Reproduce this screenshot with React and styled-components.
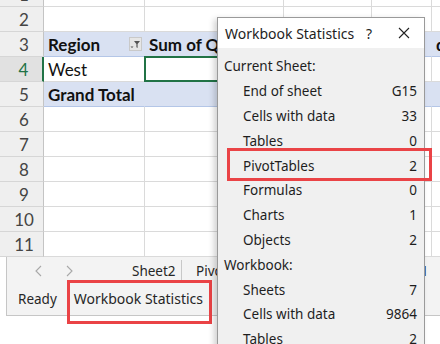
import React from "react";
import styled, { createGlobalStyle, css } from "styled-components";

const Global = createGlobalStyle`
  html, body { margin: 0; padding: 0; background: #ffffff; }
  #root { width: 440px; height: 344px; }
`;

const Window = styled.div`
  position: relative;
  width: 440px;
  height: 344px;
  overflow: hidden;
  background: #ffffff;
  display: flex;
  flex-direction: column;
`;

const Sheet = styled.div`
  margin-top: -18px;
  display: grid;
  grid-template-columns: 44px 101px 139px 88px 60px 1fr;
  grid-auto-rows: 25px;
`;

const RowHead = styled.div`
  display: flex;
  align-items: center;
  justify-content: center;
  padding-left: 5px;
  font-family: Lato, "Noto Sans", sans-serif;
  font-size: 17px;
  color: #444444;
  background: #efefef;
  border-right: 1px solid #c4c4c4;
  border-bottom: 1px solid #d6d6d6;
  box-sizing: border-box;
  ${(p) =>
    p.$selected &&
    css`
      color: #217346;
      background: #e1e1e1;
      border-right: 2px solid #217346;
    `}
`;

const Cell = styled.div`
  position: relative;
  display: flex;
  align-items: center;
  justify-content: space-between;
  padding-left: 4px;
  box-sizing: border-box;
  font-family: Lato, "Noto Sans", sans-serif;
  font-size: 17px;
  color: #111111;
  white-space: nowrap;
  overflow: visible;
  border-right: 1px solid #dadada;
  border-bottom: 1px solid #dadada;
  background: ${(p) => (p.$band ? "#d9e1f2" : "#ffffff")};
  font-weight: ${(p) => (p.$bold ? 700 : 400)};
  ${(p) =>
    p.$band &&
    css`
      border-right-color: #d9e1f2;
      border-bottom-color: #b4c6e7;
    `}
  ${(p) =>
    p.$active &&
    css`
      &::after {
        content: "";
        position: absolute;
        left: -1px;
        top: -1px;
        right: -1px;
        bottom: -1px;
        border: 2px solid #217346;
      }
    `}
`;

const FilterBtn = styled.span`
  width: 13px;
  height: 14px;
  margin-right: 2px;
  background: #e6e6e6;
  border: 1px solid #c9c9c9;
  box-sizing: border-box;
  display: flex;
  align-items: center;
  justify-content: center;
`;

const TabBar = styled.div`
  height: 25px;
  margin-left: 6px;
  border-left: 1px solid #c6c6c6;
  background: #f3f3f3;
  display: flex;
  align-items: stretch;
  font-family: "Noto Sans", "Open Sans", sans-serif;
  font-size: 13.5px;
  color: #262626;
`;

const Arrows = styled.div`
  display: flex;
  align-items: center;
  gap: 24px;
  padding-left: 28px;
  width: 82px;
  box-sizing: border-box;
  padding-top: 2px;
`;

const Tab = styled.div`
  display: flex;
  align-items: center;
  flex: none;
  width: ${(p) => p.$w}px;
  padding-left: ${(p) => p.$pl}px;
  box-sizing: border-box;
  border-right: ${(p) => (p.$sep ? "1px solid #c8c8c8" : "none")};
  margin: 3px 0 0;
  white-space: nowrap;
`;

const StatusBar = styled.div`
  height: 33px;
  margin-left: 6px;
  border-left: 1px solid #c6c6c6;
  border-bottom: 1px solid #c6c6c6;
  background: #f3f3f3;
  display: flex;
  align-items: center;
  gap: 17px;
  padding-left: 11px;
  font-family: "Noto Sans", "Open Sans", sans-serif;
  font-size: 13.5px;
  color: #262626;
`;

const Boxed = styled.span`
  position: relative;
  font-size: 14px;
  &::after {
    content: "";
    position: absolute;
    left: -7px;
    right: -9px;
    top: -9px;
    bottom: -16px;
    border: 3px solid #ea4346;
  }
`;

const Dialog = styled.div`
  position: absolute;
  left: 217px;
  top: 17px;
  width: 208px;
  height: 340px;
  box-sizing: border-box;
  border: 1px solid #9a9a9a;
  background: #f0f0f0;
  box-shadow: -3px 2px 6px rgba(0, 0, 0, 0.18);
  font-family: "Noto Sans", "Open Sans", sans-serif;
  font-size: 13.5px;
  color: #1e1e1e;
`;

const TitleBar = styled.div`
  height: 30px;
  background: #ffffff;
  display: flex;
  align-items: center;
  padding-left: 7px;
  padding-right: 14px;
`;

const Title = styled.div`
  flex: 1;
  font-size: 14px;
`;

const Help = styled.div`
  width: 10px;
  margin-right: 22px;
  font-size: 14px;
`;

const Body = styled.div`
  padding-top: 6px;
  display: flex;
  flex-direction: column;
`;

const StatRow = styled.div`
  position: relative;
  height: 24.8px;
  display: flex;
  align-items: center;
  justify-content: space-between;
  padding-left: ${(p) => (p.$section ? 6 : 25)}px;
  padding-right: 7px;
  white-space: nowrap;
  ${(p) =>
    p.$highlight &&
    css`
      &::after {
        content: "";
        position: absolute;
        left: 9px;
        right: -8px;
        top: -5px;
        bottom: -3px;
        border: 3px solid #ea4346;
      }
    `}
`;

const Funnel = () => (
  <svg width="11" height="11" viewBox="0 0 11 11">
    <path d="M4 2 H10 L7.6 5 V9 L6.4 8.2 V5 Z" fill="#555" />
    <path d="M0.5 7.5 H3.5 L2 9 Z" fill="#555" />
  </svg>
);

const Chevron = ({ dir }) => (
  <svg width="7" height="12" viewBox="0 0 7 12">
    <path
      d={dir === "left" ? "M6 1 L1 6 L6 11" : "M1 1 L6 6 L1 11"}
      fill="none"
      stroke="#a8a8a8"
      strokeWidth="1.1"
    />
  </svg>
);

const CloseIcon = () => (
  <svg width="12" height="12" viewBox="0 0 12 12">
    <path d="M1 1 L11 11 M11 1 L1 11" stroke="#222" strokeWidth="1.1" />
  </svg>
);

const rows = [
  { n: "1" },
  { n: "2" },
  { n: "3", band: true, bold: true, cells: ["Region", "Sum of Qty Sold", "", "", "d"], filter: true },
  { n: "4", selected: true, cells: ["West", "", "", "", ""] },
  { n: "5", band: true, bold: true, cells: ["Grand Total", "", "", "", ""] },
  { n: "6" },
  { n: "7" },
  { n: "8" },
  { n: "9" },
  { n: "10" },
  { n: "11" },
];

const stats = [
  { label: "Current Sheet:", section: true },
  { label: "End of sheet", value: "G15" },
  { label: "Cells with data", value: "33" },
  { label: "Tables", value: "0" },
  { label: "PivotTables", value: "2", highlight: true },
  { label: "Formulas", value: "0" },
  { label: "Charts", value: "1" },
  { label: "Objects", value: "2" },
  { label: "Workbook:", section: true },
  { label: "Sheets", value: "7" },
  { label: "Cells with data", value: "9864" },
  { label: "Tables", value: "2" },
];

export default function App() {
  return (
    <>
      <Global />
      <Window>
        <Sheet>
          {rows.map((r) => {
            const cells = r.cells || ["", "", "", "", ""];
            return (
              <React.Fragment key={r.n}>
                <RowHead $selected={r.selected}>{r.n}</RowHead>
                {cells.map((c, i) => (
                  <Cell
                    key={i}
                    $band={r.band}
                    $bold={r.bold}
                    $active={r.selected && i === 1}
                  >
                    <span>{c}</span>
                    {r.filter && i === 0 && (
                      <FilterBtn>
                        <Funnel />
                      </FilterBtn>
                    )}
                  </Cell>
                ))}
              </React.Fragment>
            );
          })}
        </Sheet>
        <TabBar>
          <Arrows>
            <Chevron dir="left" />
            <Chevron dir="right" />
          </Arrows>
          <Tab $w={98} $pl={48} $sep>
            Sheet2
          </Tab>
          <Tab $w={198} $pl={14}>
            PivotTable
          </Tab>
          <Tab $w={60} $pl={5}>
            Sheet1
          </Tab>
        </TabBar>
        <StatusBar>
          <span>Ready</span>
          <Boxed>Workbook Statistics</Boxed>
        </StatusBar>
        <Dialog>
          <TitleBar>
            <Title>Workbook Statistics</Title>
            <Help>?</Help>
            <CloseIcon />
          </TitleBar>
          <Body>
            {stats.map((s, i) => (
              <StatRow key={i} $section={s.section} $highlight={s.highlight}>
                <span>{s.label}</span>
                {s.value && <span>{s.value}</span>}
              </StatRow>
            ))}
          </Body>
        </Dialog>
      </Window>
    </>
  );
}
